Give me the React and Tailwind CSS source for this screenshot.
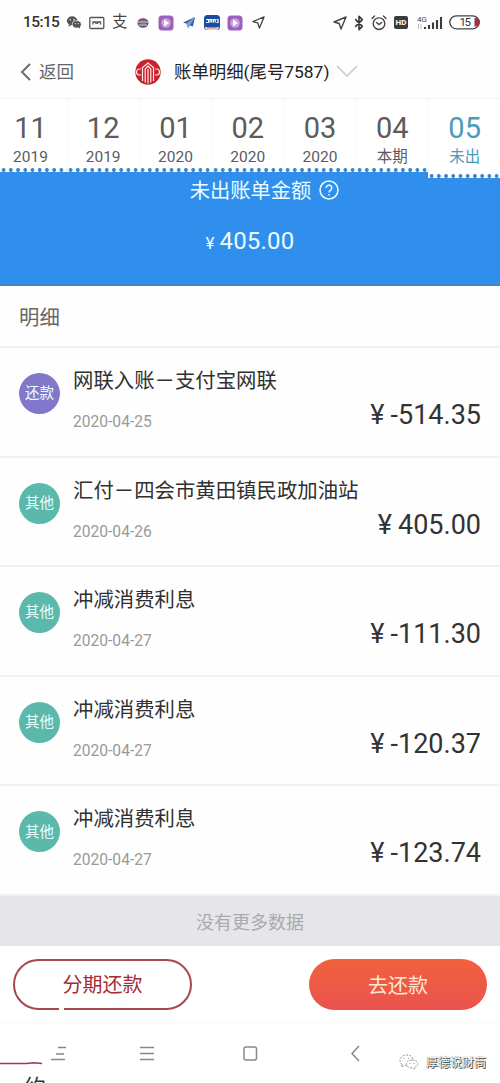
import React from 'react';
import { Bluetooth } from 'lucide-react';

const months = [
  { month: '11', label: '2019' },
  { month: '12', label: '2019' },
  { month: '01', label: '2020' },
  { month: '02', label: '2020' },
  { month: '03', label: '2020' },
  { month: '04', label: '本期' },
  { month: '05', label: '未出', active: true },
];

const records = [
  { tag: '还款', title: '网联入账－支付宝网联', date: '2020-04-25', amount: '-514.35', color: 'bg-[#8178cb]' },
  { tag: '其他', title: '汇付－四会市黄田镇民政加油站', date: '2020-04-26', amount: '405.00', color: 'bg-[#5cb8aa]' },
  { tag: '其他', title: '冲减消费利息', date: '2020-04-27', amount: '-111.30', color: 'bg-[#5cb8aa]' },
  { tag: '其他', title: '冲减消费利息', date: '2020-04-27', amount: '-120.37', color: 'bg-[#5cb8aa]' },
  { tag: '其他', title: '冲减消费利息', date: '2020-04-27', amount: '-123.74', color: 'bg-[#5cb8aa]' },
];

function WechatIcon({ className }) {
  return (
    <svg viewBox="0 0 16 14" className={className}>
      <ellipse cx="6" cy="5.2" rx="5.7" ry="4.8" fill="#555" />
      <path d="M2.5 8.5 2 11.5 5 9.6z" fill="#555" />
      <ellipse cx="11" cy="9" rx="4.8" ry="4" fill="#555" stroke="#fff" strokeWidth=".7" />
      <path d="m12.5 12 2 1.6-.3-2.6z" fill="#555" />
      <g fill="#fff">
        <circle cx="4" cy="4" r=".8" />
        <circle cx="8" cy="4" r=".8" />
        <circle cx="9.4" cy="8.2" r=".6" />
        <circle cx="12.5" cy="8.2" r=".6" />
      </g>
    </svg>
  );
}

function PlayBadge() {
  return (
    <svg viewBox="0 0 16 16" className="size-4">
      <rect x=".5" y=".5" width="15" height="15" rx="3.5" fill="#9c61bd" />
      <circle cx="8" cy="8" r="4.8" fill="#c7a0dc" />
      <path d="M6 4.5 11.2 8 6 11.5z" fill="#fff" />
    </svg>
  );
}

function LocationArrow({ className }) {
  return (
    <svg viewBox="0 0 14 14" className={className} fill="none" stroke="#444" strokeWidth="1.4" strokeLinejoin="round">
      <path d="M13 1 1 6l5.2 1.5L8 13z" />
    </svg>
  );
}

function StatusBar() {
  return (
    <div className="flex h-[45px] items-center pl-[23px] pr-[20px] text-[#333]">
      <span className="w-[36px] whitespace-nowrap text-[15.500px] font-medium leading-none tracking-[-0.600px]">15:15</span>
      <WechatIcon className="ml-[7px] h-[13px] w-4" />
      <svg viewBox="0 0 16 14" className="ml-[7px] h-[14px] w-4" fill="none" stroke="#555" strokeWidth="1.3">
        <rect x=".8" y="1.5" width="14" height="11" rx="1" />
        <path d="M4 8.500V6h3v2M8.500 8V6h3v2.500" />
      </svg>
      <span className="ml-[7px] w-[16px] text-[15.500px] leading-none text-[#444]">支</span>
      <svg viewBox="0 0 12 12" className="ml-[9px] size-3">
        <ellipse cx="6" cy="6" rx="5.5" ry="4.8" fill="#59556f" />
        <path d="M1 5h10M2 8h8" stroke="#fff" strokeWidth=".8" />
        <path d="M3 3.2h6M3 6.5h6" stroke="#ca4e5c" strokeWidth="1.2" />
      </svg>
      <span className="ml-[9px]"><PlayBadge /></span>
      <svg viewBox="0 0 14 14" className="ml-[8px] size-[14px]">
        <path d="M13 1 1 6.5l3.5 1.3L6 12l2-2.5 3 1z" fill="#3e65a9" />
        <path d="M13 1 4.5 7.8 6 12z" fill="#7da9df" />
      </svg>
      <svg viewBox="0 0 16 16" className="ml-[8px] size-4">
        <rect width="16" height="15" rx="3.5" fill="#174f9c" />
        <path d="M1 12h14l-1 2.5a3 3 0 0 1-2 .5H4a3 3 0 0 1-3-3z" fill="#efd1cc" />
        <path d="M3 12.8h10" stroke="#d15b52" />
        <path d="M2 4.5h2.5v3H2M6 7.5v-3h1.7v3M9.4 7.5v-3h1.8v3M12.5 4.5H14v3h-1.5" fill="none" stroke="#fff" strokeWidth="1.2" />
      </svg>
      <span className="ml-[7px]"><PlayBadge /></span>
      <LocationArrow className="ml-[9px] size-[13px]" />

      <LocationArrow className="ml-auto size-[14px]" />
      <Bluetooth className="ml-[4px] size-[16px]" strokeWidth={2.3} />
      <svg viewBox="0 0 16 16" className="ml-[4px] size-4" fill="none" stroke="#444" strokeWidth="1.4" strokeLinecap="round">
        <circle cx="8" cy="8.7" r="5.8" />
        <path d="M1 3.5 3.5 1M15 3.5 12.5 1M5.5 7.5 8 9.5l2.7-2" />
      </svg>
      <span className="ml-[7px] flex h-[13px] w-[14px] items-center justify-center rounded-[2px] bg-[#3b3b3b] text-[8px] font-bold leading-none text-white">HD</span>
      <svg viewBox="0 0 26 16" className="ml-[9px] h-4 w-[26px]">
        <text x="0" y="6.500" fontSize="8" fill="#444" className="font-['Roboto',sans-serif]">4G</text>
        <path d="M1.5 9v5M4 9v5" stroke="#bbb" />
        <path d="M8 14v-2M12 14v-4M16 14V7.500M20 14V5M24 14V2" stroke="#3b3b3b" strokeWidth="2.1" />
      </svg>
      <svg viewBox="0 0 31 15" className="ml-[6px] h-[15px] w-[31px]">
        <rect x=".8" y=".8" width="29.400" height="13" rx="6.500" fill="#fff" stroke="#444" strokeWidth="1.3" />
        <path d="M25.500 3h1a4 4 0 0 1 0 8.600h-1z" fill="#a23144" />
        <text x="10.500" y="11.300" fontSize="11.500" textLength="11.500" fill="#333" className="font-['Roboto',sans-serif]">15</text>
      </svg>
    </div>
  );
}

function Header() {
  return (
    <header className="flex h-[54px] items-center border-b border-[#f2f2f2] pl-[20px]">
      <svg viewBox="0 0 11 18" className="h-[18px] w-[11px]" fill="none" stroke="#666" strokeWidth="1.8">
        <path d="M10 1 2 9l8 8" />
      </svg>
      <span className="ml-[8px] mt-[3px] text-[17.500px] leading-none text-[#666]">返回</span>
      <svg viewBox="0 0 26 26" className="ml-[61px] size-[26px]">
        <circle cx="13" cy="13" r="12.700" fill="#c9222d" />
        <g fill="none" stroke="#ffe9e6" strokeWidth="1.200">
          <path d="M6 10H4.500a3 3 0 0 0 0 6H6M20 10h1.500a3 3 0 0 1 0 6H20" />
          <path d="M7.500 22V8.500L13 4l5.500 4.500V22M10.200 23.500V10l2.800-3 2.800 3v13.500M13 10v14.500" />
        </g>
      </svg>
      <h1 className="ml-[13px] mt-[3px] whitespace-nowrap text-[17.400px] leading-none text-[#222]">账单明细(尾号7587)</h1>
      <svg viewBox="0 0 22 13" className="ml-[7px] h-[13px] w-[22px]" fill="none" stroke="#ccc" strokeWidth="1.600">
        <path d="m1 1 10 10L21 1" />
      </svg>
    </header>
  );
}

function MonthTabs() {
  return (
    <nav className="relative z-10 flex h-[73px] bg-white">
      {months.map((m, i) => (
        <div
          key={i}
          className={`flex shrink-0 flex-col items-center bg-white bg-[radial-gradient(circle,#3d86c8_1.700px,transparent_2.200px)] bg-[length:7.230px_4px] bg-bottom-left bg-repeat-x pt-[12px] leading-none ${i === 0 ? 'w-[67px] pr-[6px]' : 'w-[72.300px] shadow-[inset_1px_0_0_#f7f7f7]'} ${m.active ? 'h-[79px] text-[#469dbb]' : 'h-[73px] text-[#5c5c5c]'}`}
        >
          <span className="text-[29px] leading-[34px]">{m.month}</span>
          <span className="mt-[4px] text-[15.500px] leading-[16px]">{m.label}</span>
        </div>
      ))}
    </nav>
  );
}

function Summary() {
  return (
    <section className="flex h-[114px] flex-col items-center border-b-2 border-[#4387bf] bg-[#308eec] text-[#e9fdff]">
      <div className="mt-[4px] flex h-[27px] items-center pl-[29px]">
        <span className="mt-[3px] text-[20.300px] leading-none">未出账单金额</span>
        <svg viewBox="0 0 20 20" className="ml-[8px] size-[20px]" fill="none" stroke="currentColor" strokeWidth="1.500">
          <circle cx="10" cy="10" r="9" />
          <path d="M7.200 8a2.800 2.800 0 1 1 4.300 2.300C10.400 11 10 11.300 10 12.500M10 14v1.600" />
        </svg>
      </div>
      <div className="mt-[26px] flex items-baseline leading-none">
        <span className="mr-[5px] text-[17px]">¥</span>
        <span className="text-[24px] tracking-[0.200px]">405.00</span>
      </div>
    </section>
  );
}

function RecordRow({ record }) {
  return (
    <li className="flex h-[109.600px] border-b-2 border-[#f2f2f2] pl-[19px] pr-[19px]">
      <span className={`mt-[25px] flex size-[41px] shrink-0 items-center justify-center rounded-full pt-[2px] text-[14.500px] leading-none text-[#e9ffff] ${record.color}`}>
        {record.tag}
      </span>
      <div className="ml-[13px] flex flex-col whitespace-nowrap">
        <span className="mt-[19px] text-[20.400px] leading-[28px] text-[#303030]">{record.title}</span>
        <span className="mt-[18px] text-[15.600px] leading-[18px] text-[#999]">{record.date}</span>
      </div>
      <div className="ml-auto flex items-baseline self-start whitespace-nowrap pt-[51px] text-[27px] leading-[32px] text-[#333]">
        <span className="mr-[6px]">¥</span>
        <span>{record.amount}</span>
      </div>
    </li>
  );
}

function BottomBar() {
  return (
    <footer className="h-[137px] bg-white">
      <div className="flex h-[77px] items-start justify-between border-b border-[#f8f8f8] px-[13px] pt-[13px] text-[20px] leading-none">
        <div className="relative">
          <button className="h-[51px] w-[179px] rounded-full border-2 border-[#a9474e] pt-[2px] text-[#a52b35]">分期还款</button>
          {/* small break in the outline */}
          <span className="absolute bottom-0 left-[46px] h-[3px] w-[5px] bg-white" />
        </div>
        <button className="h-[51px] w-[178px] rounded-full bg-linear-to-b from-[#f2613d] to-[#e9524d] pt-[3px] text-[#ffe9d2]">去还款</button>
      </div>
      <div className="relative h-[60px] overflow-hidden">
        <svg viewBox="0 0 500 60" className="h-[60px] w-[500px]" fill="none" stroke="#888" strokeWidth="1.500">
          <path d="M58 24.500h8M56 31h8M51 36.500h14" />
          <path d="M140 24.500h14M140 30.500h14M140 36.500h14" />
          <rect x="244" y="24" width="12.500" height="13" rx="2" />
          <path d="m359 23-7 7.500 7 7.500" />
          <path d="M0 40.500h26l8-.7 8 .7" stroke="#a03a42" />
        </svg>
        <span className="absolute left-[24px] top-[54px] text-[22px] leading-none text-[#333]">约</span>
        <div className="absolute left-[399px] top-[29px] flex items-center">
          <svg viewBox="0 0 20 16" className="h-[16px] w-[20px]" fill="#fff" stroke="#888" strokeWidth=".9" strokeDasharray="2 1.300">
            <path d="M3 10.500C-1 7 1.500 1 7.500 1S14 5 13.500 6M3 10.500 2.500 13l3-1.500 3 .3" />
            <path d="M13 6c-7.500 0-7.500 8 0 8l3 1-.4-1.500C21 11 19 6 13 6z" />
            <path d="M5 4v1M9.500 4v1M11 9v1M15 9v1" />
          </svg>
          <span className="ml-[7px] mt-[1px] whitespace-nowrap text-[12px] leading-[20px] text-white [text-shadow:1px_1px_0_#444,0_0_1px_#333]">厚德说财商</span>
        </div>
      </div>
    </footer>
  );
}

export default function App() {
  return (
    <div className="h-[1083px] w-[500px] overflow-hidden bg-[#fefefe] font-['Roboto','Noto_Sans_CJK_SC',sans-serif]">
      <StatusBar />
      <Header />
      <MonthTabs />
      <Summary />
      <h2 className="flex h-[62px] items-center border-b-2 border-[#f2f2f2] pl-[19px] pt-[4px] text-[20.400px] leading-none text-[#666]">明细</h2>
      <ul>
        {records.map((r, i) => (
          <RecordRow key={i} record={r} />
        ))}
      </ul>
      <div className="flex h-[50px] items-center justify-center bg-[#e6e6ea] pt-[4px] text-[18px] leading-none text-[#aaa]">没有更多数据</div>
      <BottomBar />
    </div>
  );
}
